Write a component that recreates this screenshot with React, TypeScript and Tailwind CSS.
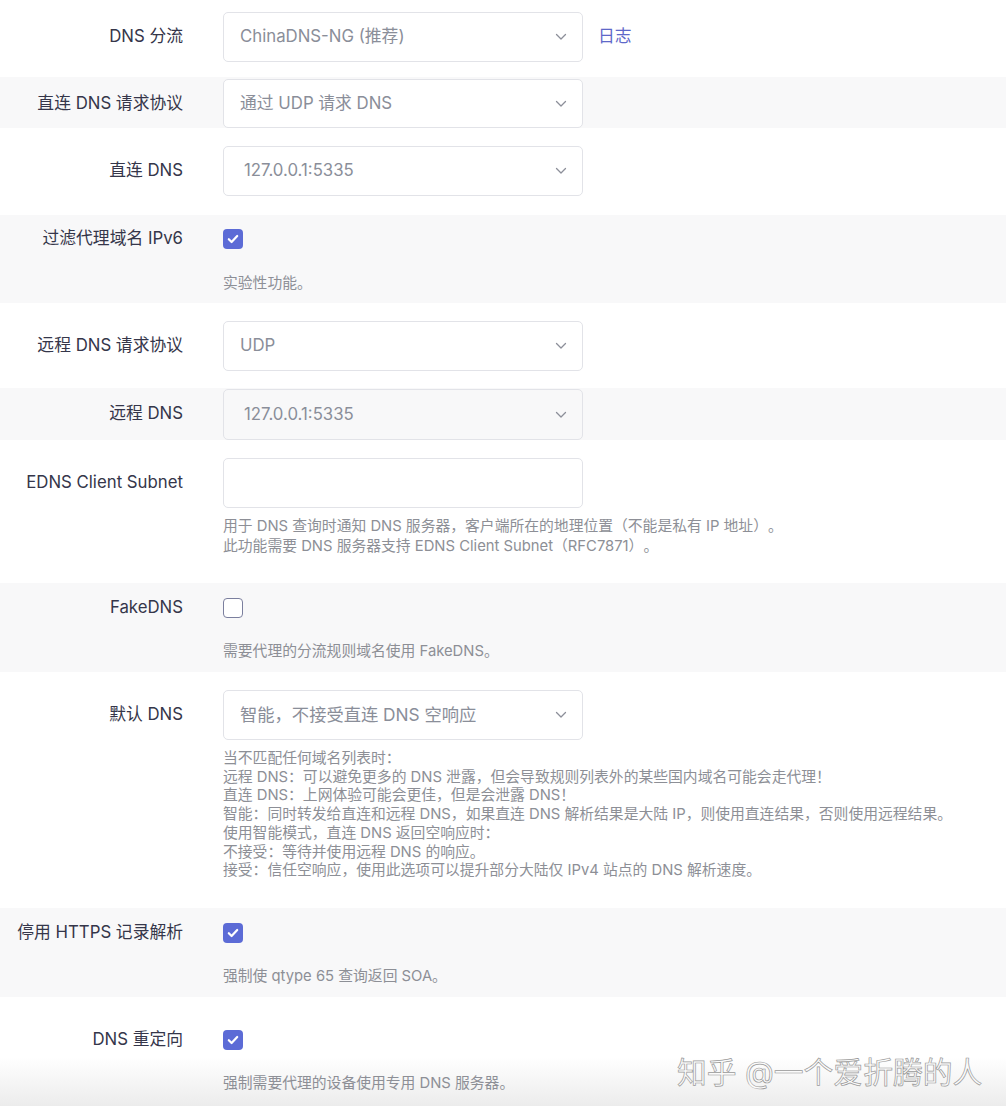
import React from "react";

const FONT = "font-['Inter','Noto_Sans_CJK_SC',sans-serif]";

function Chevron() {
  return (
    <svg width="12" height="8" viewBox="0 0 12 8" className="shrink-0">
      <path d="M1.5 1.5 L6 6 L10.5 1.5" fill="none" stroke="#8c8f99" strokeWidth="1.3" strokeLinecap="round" strokeLinejoin="round" />
    </svg>
  );
}

function Select({ value, pl = "pl-4", bg = "bg-white", h = "h-[50px]", size = "text-[16.8px]" }: { value: string; pl?: string; bg?: string; h?: string; size?: string }) {
  return (
    <div className={`w-[360px] ${h} ${bg} border border-[#e2e3e8] rounded-[5px] flex items-center justify-between ${pl} pr-[15px]`}>
      <span className={`${size} text-[#8a8e99]`}>{value}</span>
      <Chevron />
    </div>
  );
}

function Checkbox({ checked }: { checked: boolean }) {
  if (checked) {
    return (
      <div className="w-5 h-5 rounded-[4px] bg-[#5c6bd6] flex items-center justify-center">
        <svg width="12" height="10" viewBox="0 0 12 10">
          <path d="M1.8 5.2 L4.6 8 L10.2 2" fill="none" stroke="#fff" strokeWidth="2.2" strokeLinecap="round" strokeLinejoin="round" />
        </svg>
      </div>
    );
  }
  return <div className="w-5 h-5 rounded-[4px] border-[1.5px] border-[#7b7f9e] bg-white" />;
}

function Label({ text, h = "h-[50px]" }: { text: string; h?: string }) {
  return (
    <div className={`w-[183px] shrink-0 ${h} flex items-center justify-end text-[16.8px] text-[#35364a] whitespace-nowrap`}>
      {text}
    </div>
  );
}

function Help({ lines, mt, leading = "leading-[20px]" }: { lines: string[]; mt: string; leading?: string }) {
  return (
    <div className={`${mt} text-[14.8px] ${leading} text-[#8d8f96] whitespace-nowrap`}>
      {lines.map((l, i) => (
        <div key={i}>{l}</div>
      ))}
    </div>
  );
}

export default function App() {
  return (
    <div className={`relative w-[1006px] h-[1114px] bg-white overflow-hidden [text-spacing-trim:space-all] ${FONT}`}>
      {/* Row 1 */}
      <div className="flex h-[77px] pt-3 bg-white">
        <Label text="DNS 分流" />
        <div className="ml-10 flex items-start">
          <Select value="ChinaDNS-NG (推荐)" />
          <div className="h-[50px] flex items-center ml-[15px] text-[16.8px] text-[#5e68c9]">日志</div>
        </div>
      </div>
      {/* Row 2 */}
      <div className="flex h-[51px] pt-[2px] bg-[#f8f8f9]">
        <Label text="直连 DNS 请求协议" h="h-[49px]" />
        <div className="ml-10">
          <Select value="通过 UDP 请求 DNS" h="h-[49px]" />
        </div>
      </div>
      {/* Row 3 */}
      <div className="flex h-[87px] pt-[18px] bg-white">
        <Label text="直连 DNS" />
        <div className="ml-10">
          <Select value="127.0.0.1:5335" pl="pl-5" />
        </div>
      </div>
      {/* Row 4 */}
      <div className="flex h-[88px] pt-[14px] bg-[#f8f8f9]">
        <Label text="过滤代理域名 IPv6" h="h-5" />
        <div className="ml-10">
          <Checkbox checked />
          <Help lines={["实验性功能。"]} mt="mt-[24px]" />
        </div>
      </div>
      {/* Row 5 */}
      <div className="flex h-[85px] pt-[18px] bg-white">
        <Label text="远程 DNS 请求协议" />
        <div className="ml-10">
          <Select value="UDP" />
        </div>
      </div>
      {/* Row 6 */}
      <div className="flex h-[52px] pt-[1px] bg-[#f8f8f9]">
        <Label text="远程 DNS" />
        <div className="ml-10">
          <Select value="127.0.0.1:5335" pl="pl-5" bg="bg-[#f8f8f9]" h="h-[51px]" />
        </div>
      </div>
      {/* Row 7 */}
      <div className="flex h-[143px] pt-[18px] bg-white">
        <Label text="EDNS Client Subnet" />
        <div className="ml-10">
          <div className="w-[360px] h-[50px] bg-white border border-[#e2e3e8] rounded-[5px]" />
          <Help
            mt="mt-[8px]"
            lines={[
              "用于 DNS 查询时通知 DNS 服务器，客户端所在的地理位置（不能是私有 IP 地址）。",
              "此功能需要 DNS 服务器支持 EDNS Client Subnet（RFC7871）。",
            ]}
          />
        </div>
      </div>
      {/* Row 8 */}
      <div className="flex h-[89px] pt-[15px] bg-[#f8f8f9]">
        <Label text="FakeDNS" h="h-5" />
        <div className="ml-10">
          <Checkbox checked={false} />
          <Help lines={["需要代理的分流规则域名使用 FakeDNS。"]} mt="mt-[23px]" />
        </div>
      </div>
      {/* Row 9 */}
      <div className="flex h-[236px] pt-[18px] bg-white">
        <Label text="默认 DNS" />
        <div className="ml-10">
          <Select value="智能，不接受直连 DNS 空响应" size="text-[17.3px]" />
          <Help
            mt="mt-[9px]"
            leading="leading-[18.7px]"
            lines={[
              "当不匹配任何域名列表时：",
              "远程 DNS：可以避免更多的 DNS 泄露，但会导致规则列表外的某些国内域名可能会走代理！",
              "直连 DNS：上网体验可能会更佳，但是会泄露 DNS！",
              "智能：同时转发给直连和远程 DNS，如果直连 DNS 解析结果是大陆 IP，则使用直连结果，否则使用远程结果。",
              "使用智能模式，直连 DNS 返回空响应时：",
              "不接受：等待并使用远程 DNS 的响应。",
              "接受：信任空响应，使用此选项可以提升部分大陆仅 IPv4 站点的 DNS 解析速度。",
            ]}
          />
        </div>
      </div>
      {/* Row 10 */}
      <div className="flex h-[89px] pt-[15px] bg-[#f8f8f9]">
        <Label text="停用 HTTPS 记录解析" h="h-5" />
        <div className="ml-10">
          <Checkbox checked />
          <Help lines={["强制使 qtype 65 查询返回 SOA。"]} mt="mt-[23px]" />
        </div>
      </div>
      {/* Row 11 */}
      <div className="flex h-[109px] pt-[33px] bg-[linear-gradient(to_bottom,#ffffff_0%,#ffffff_55%,#ececec_100%)]">
        <Label text="DNS 重定向" h="h-5" />
        <div className="ml-10">
          <Checkbox checked />
          <Help lines={["强制需要代理的设备使用专用 DNS 服务器。"]} mt="mt-[23px]" />
        </div>
      </div>
      {/* watermark */}
      <div className="absolute left-[677px] top-[1053px] text-[29.8px] leading-[38px] text-[#fbfbfb] whitespace-nowrap [-webkit-text-stroke:0.7px_#9a9a9a]">
        知乎 @一个爱折腾的人
      </div>
    </div>
  );
}
